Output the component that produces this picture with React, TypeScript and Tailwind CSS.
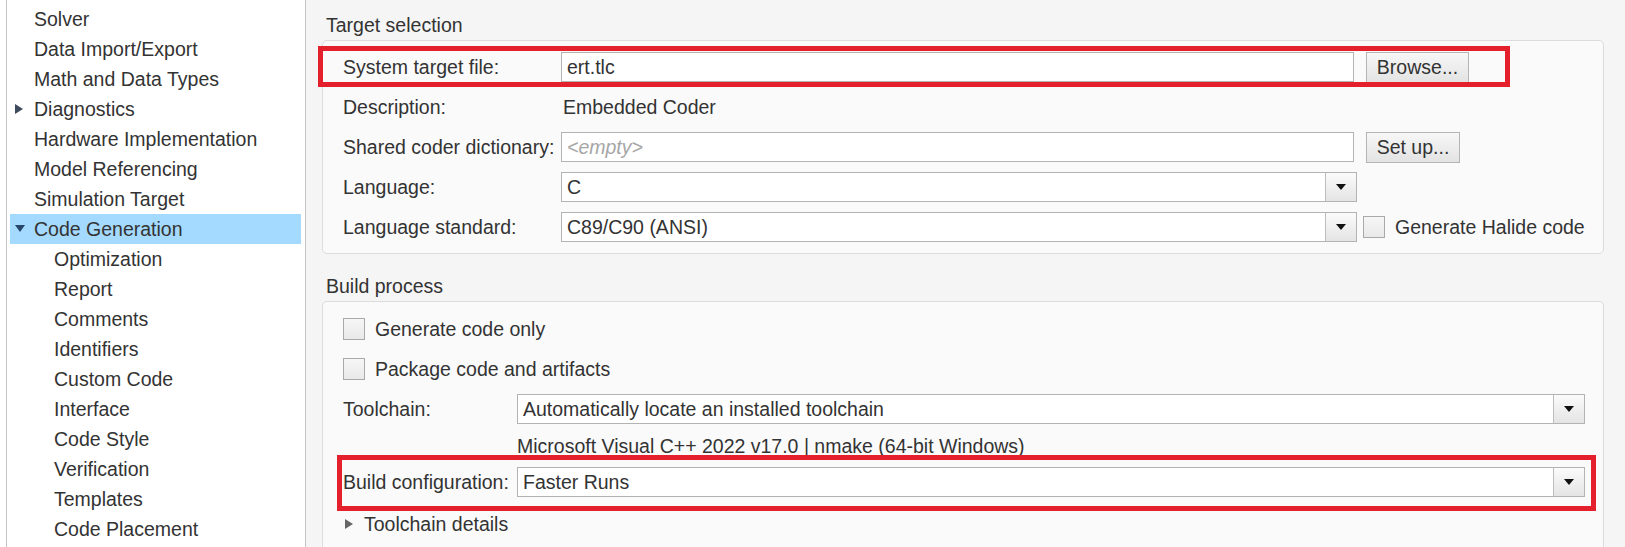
import React from 'react';

type TreeItem = {
  label: string;
  level?: number;
  toggle?: 'open' | 'closed';
  selected?: boolean;
};

const treeItems: TreeItem[] = [
  { label: 'Solver' },
  { label: 'Data Import/Export' },
  { label: 'Math and Data Types' },
  { label: 'Diagnostics', toggle: 'closed' },
  { label: 'Hardware Implementation' },
  { label: 'Model Referencing' },
  { label: 'Simulation Target' },
  { label: 'Code Generation', toggle: 'open', selected: true },
  { label: 'Optimization', level: 1 },
  { label: 'Report', level: 1 },
  { label: 'Comments', level: 1 },
  { label: 'Identifiers', level: 1 },
  { label: 'Custom Code', level: 1 },
  { label: 'Interface', level: 1 },
  { label: 'Code Style', level: 1 },
  { label: 'Verification', level: 1 },
  { label: 'Templates', level: 1 },
  { label: 'Code Placement', level: 1 },
];

function TreeRow({ item }: { item: TreeItem }) {
  return (
    <div
      className={`flex h-[30px] items-center ${item.selected ? 'bg-[#a4daff]' : ''}`}
    >
      <div className="flex w-[24px] shrink-0 items-center justify-start pl-[5px]">
        {item.toggle === 'closed' && (
          <svg width="9" height="10" viewBox="0 0 9 10">
            <polygon points="0,0 8,5 0,10" fill="#3d4b5c" />
          </svg>
        )}
        {item.toggle === 'open' && (
          <svg width="10" height="8" viewBox="0 0 10 8">
            <polygon points="0,0 10,0 5,7" fill="#27466a" />
          </svg>
        )}
      </div>
      <span className={`${item.level === 1 ? 'pl-[20px]' : ''} whitespace-nowrap`}>
        {item.label}
      </span>
    </div>
  );
}

function DropArrow() {
  return (
    <svg width="10" height="6" viewBox="0 0 10 6">
      <polygon points="0,0 10,0 5,6" fill="#111" />
    </svg>
  );
}

function TextField({ value, placeholder, width }: { value?: string; placeholder?: string; width: string }) {
  return (
    <div className={`flex h-full ${width} items-center border border-[#b3b3b3] bg-white pl-[5px]`}>
      {value ? (
        <span>{value}</span>
      ) : (
        <span className="italic text-[#a6a6a6]">{placeholder}</span>
      )}
    </div>
  );
}

function Select({ value, width }: { value: string; width: string }) {
  return (
    <div className={`flex h-full ${width} border border-[#b3b3b3] bg-white`}>
      <div className="flex flex-1 items-center pl-[5px] whitespace-nowrap">{value}</div>
      <div className="flex w-[31px] items-center justify-center border-l border-[#bdbdbd] bg-gradient-to-b from-[#fbfbfb] to-[#e4e4e4]">
        <DropArrow />
      </div>
    </div>
  );
}

function Button({ label, width }: { label: string; width: string }) {
  return (
    <div
      className={`ml-[12px] flex h-[31px] ${width} items-center justify-center border border-[#b5b5b5] bg-gradient-to-b from-[#f7f7f7] to-[#e3e3e3]`}
    >
      {label}
    </div>
  );
}

function Checkbox() {
  return (
    <div className="h-[22px] w-[22px] shrink-0 border border-[#a9a9a9] bg-gradient-to-b from-[#f6f6f6] to-[#e9e9e9]" />
  );
}

function Highlight({ className }: { className: string }) {
  return (
    <div className={`pointer-events-none absolute border-[5px] border-[#e3202b] ${className}`} />
  );
}

export default function App() {
  return (
    <div className="flex h-[547px] w-[1625px] overflow-hidden bg-[#f5f5f5] font-['Liberation_Sans',Arial,sans-serif] text-[19.5px] leading-[22px] text-[#333]">
      {/* Tree */}
      <aside className="h-full w-[306px] shrink-0 border-r border-[#c4c4c4] bg-white pl-[6px]">
        <div className="h-full border-l border-[#c4c4c4] pl-[3px] pr-[4px] pt-[4px]">
          {treeItems.map((item) => (
            <TreeRow key={item.label} item={item} />
          ))}
        </div>
      </aside>

      {/* Settings */}
      <main className="flex-1 pl-[16px] pr-[21px] pt-[9px]">
        <div className="flex h-[31px] items-center pl-[4px]">Target selection</div>
        <div className="flex flex-col gap-[10px] rounded-[5px] border border-[#dcdcdc] bg-[#fafafa] pb-[11px] pt-[11px]">
          <div className="relative flex h-[30px] items-center pl-[20px]">
            <Highlight className="left-[-5px] top-[-6px] h-[41px] w-[1192px]" />
            <div className="w-[218px] shrink-0">System target file:</div>
            <TextField value="ert.tlc" width="w-[793px]" />
            <Button label="Browse..." width="w-[103px]" />
          </div>
          <div className="flex h-[30px] items-center pl-[20px]">
            <div className="w-[218px] shrink-0">Description:</div>
            <div className="pl-[2px]">Embedded Coder</div>
          </div>
          <div className="flex h-[30px] items-center pl-[20px]">
            <div className="w-[218px] shrink-0 whitespace-nowrap">Shared coder dictionary:</div>
            <TextField placeholder="<empty>" width="w-[793px]" />
            <Button label="Set up..." width="w-[94px]" />
          </div>
          <div className="flex h-[30px] items-center pl-[20px]">
            <div className="w-[218px] shrink-0">Language:</div>
            <Select value="C" width="w-[796px]" />
          </div>
          <div className="flex h-[30px] items-center pl-[20px]">
            <div className="w-[218px] shrink-0">Language standard:</div>
            <Select value="C89/C90 (ANSI)" width="w-[796px]" />
            <div className="ml-[6px] flex items-center gap-[10px]">
              <Checkbox />
              <span className="whitespace-nowrap">Generate Halide code</span>
            </div>
          </div>
        </div>

        <div className="mt-[16px] flex h-[31px] items-center pl-[4px]">Build process</div>
        <div className="rounded-t-[5px] border border-b-0 border-[#dcdcdc] bg-[#fafafa] pt-[12px] pb-[20px]">
          <div className="flex h-[30px] items-center gap-[10px] pl-[20px]">
            <Checkbox />
            <span>Generate code only</span>
          </div>
          <div className="mt-[10px] flex h-[30px] items-center gap-[10px] pl-[20px]">
            <Checkbox />
            <span>Package code and artifacts</span>
          </div>
          <div className="mt-[10px] flex h-[30px] items-center pl-[20px]">
            <div className="w-[174px] shrink-0">Toolchain:</div>
            <Select value="Automatically locate an installed toolchain" width="w-[1068px]" />
          </div>
          <div className="mt-[11px] flex h-[22px] items-center pl-[194px]">
            Microsoft Visual C++ 2022 v17.0 | nmake (64-bit Windows)
          </div>
          <div className="relative mt-[10px] flex h-[30px] items-center pl-[20px]">
            <Highlight className="left-[14px] top-[-12px] h-[56px] w-[1259px]" />
            <div className="w-[174px] shrink-0 whitespace-nowrap">Build configuration:</div>
            <Select value="Faster Runs" width="w-[1068px]" />
          </div>
          <div className="mt-[12px] flex h-[30px] items-center pl-[22px]">
            <svg width="8" height="10" viewBox="0 0 8 10">
              <polygon points="0,0 8,5 0,10" fill="#666" />
            </svg>
            <span className="ml-[11px]">Toolchain details</span>
          </div>
        </div>
      </main>
    </div>
  );
}
